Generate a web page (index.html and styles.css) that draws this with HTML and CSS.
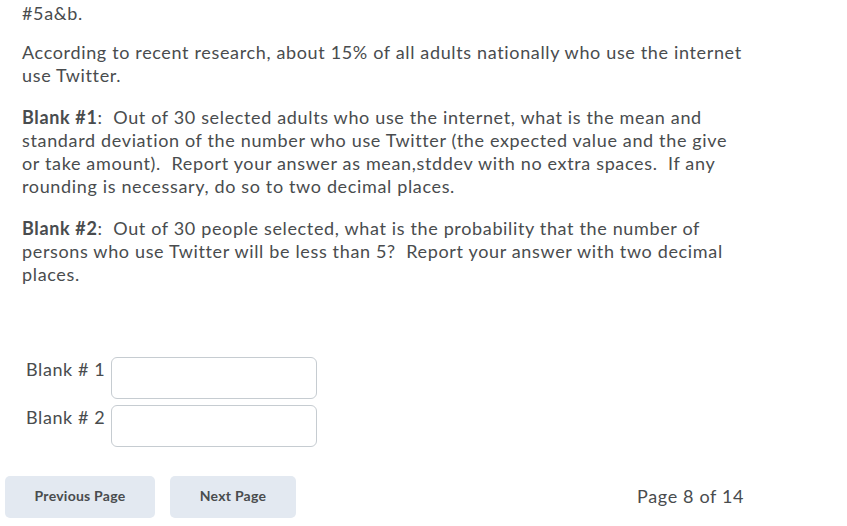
FILE: index.html
```html
<!DOCTYPE html>
<html lang="en">
<head>
<meta charset="utf-8">
<title>Quiz page 8</title>
<link rel="stylesheet" href="styles.css">
</head>
<body>
<main class="page">
  <section class="question">
    <p class="q-id">#5a&amp;b.</p>
    <p class="para">According to recent research, about 15% of all adults nationally who use the internet use Twitter.</p>
    <p class="para"><strong>Blank #1</strong>:&nbsp; Out of 30 selected adults who use the internet, what is the mean and standard deviation of the number who use Twitter (the expected value and the give or take amount).&nbsp; Report your answer as mean,stddev with no extra spaces.&nbsp; If any rounding is necessary, do so to two decimal places.</p>
    <p class="para"><strong>Blank #2</strong>:&nbsp; Out of 30 people selected, what is the probability that the number of persons who use Twitter will be less than 5?&nbsp; Report your answer with two decimal places.</p>
  </section>
  <section class="blanks">
    <div class="blank-row">
      <label class="blank-label" for="b1">Blank # 1</label>
      <input class="blank-input" id="b1" type="text">
    </div>
    <div class="blank-row">
      <label class="blank-label" for="b2">Blank # 2</label>
      <input class="blank-input" id="b2" type="text">
    </div>
  </section>
  <nav class="pager">
    <button class="btn btn-prev" type="button">Previous Page</button>
    <button class="btn btn-next" type="button">Next Page</button>
    <span class="page-count">Page 8 of 14</span>
  </nav>
</main>
</body>
</html>
```

FILE: styles.css
```css
html, body {
  margin: 0;
  padding: 0;
  background: #ffffff;
}

body {
  font-family: Lato, "Open Sans", sans-serif;
  color: #494c4e;
}

.page {
  display: flex;
  flex-direction: column;
  width: 847px;
}

.question {
  padding: 2px 0 0 22px;
  width: 724px;
}

.q-id {
  margin: 0 0 16px;
  font-size: 18px;
  line-height: 23px;
  letter-spacing: 0.65px;
}

.para {
  margin: 0 0 19px;
  font-size: 18px;
  line-height: 23px;
  letter-spacing: 0.65px;
}

.para strong {
  font-weight: 700;
}

.blanks {
  display: flex;
  flex-direction: column;
  gap: 6px;
  padding: 52px 0 0 26px;
}

.blank-row {
  display: flex;
  align-items: flex-start;
  gap: 7px;
}

.blank-label {
  width: 78px;
  font-size: 18px;
  line-height: 23px;
  letter-spacing: 0.6px;
  padding-top: 1px;
  white-space: nowrap;
}

.blank-input {
  box-sizing: border-box;
  width: 206px;
  height: 42px;
  margin: 0;
  border: 1px solid #c6ccd1;
  border-radius: 6px;
  background: #ffffff;
}

.pager {
  display: flex;
  align-items: center;
  padding: 29px 0 0 5px;
}

.btn {
  box-sizing: border-box;
  height: 42px;
  padding: 0 0 3px;
  border: none;
  border-radius: 5px;
  background: #e3e9f1;
  color: #494c4e;
  font-family: Lato, "Open Sans", sans-serif;
  font-size: 14px;
  font-weight: 700;
  letter-spacing: 0.25px;
}

.btn-prev {
  width: 150px;
}

.btn-next {
  width: 126px;
  margin-left: 15px;
}

.page-count {
  margin: 0 0 3px 341px;
  font-size: 18px;
  letter-spacing: 0.65px;
}
```
